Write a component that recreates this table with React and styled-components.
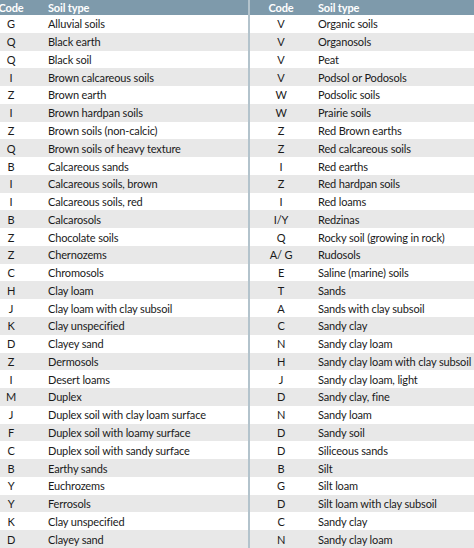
import React from "react";
import styled, { createGlobalStyle } from "styled-components";

const GlobalStyle = createGlobalStyle`
  html, body {
    margin: 0;
    padding: 0;
    background: #fff;
  }
`;

const Page = styled.div`
  width: 474px;
  height: 548px;
  overflow: hidden;
  font-family: 'Lato', 'Open Sans', sans-serif;
  color: #1a1a1a;
`;

const Table = styled.div`
  display: flex;
  margin-left: -20px;
  width: 540px;
`;

const Half = styled.div`
  width: 270px;
  box-sizing: border-box;
  display: grid;
  grid-template-rows: 15px repeat(30, 17.77px);
  border-right: ${(p) => (p.divider ? "2px solid #b3c3cc" : "none")};
`;

const Row = styled.div`
  display: grid;
  grid-template-columns: 62px 1fr;
  align-items: center;
  background: ${(p) => (p.header ? "#7e9aab" : p.shade ? "#e8e8e8" : "#fff")};
  color: ${(p) => (p.header ? "#fff" : "#1a1a1a")};
  font-weight: ${(p) => (p.header ? 700 : 400)};
  font-size: 11px;
  letter-spacing: -0.15px;
  white-space: nowrap;
  overflow: hidden;
`;

const Code = styled.span`
  text-align: center;
`;

const Name = styled.span`
  padding-left: 6px;
`;

const left = [
  ["G", "Alluvial soils"],
  ["Q", "Black earth"],
  ["Q", "Black soil"],
  ["I", "Brown calcareous soils"],
  ["Z", "Brown earth"],
  ["I", "Brown hardpan soils"],
  ["Z", "Brown soils (non-calcic)"],
  ["Q", "Brown soils of heavy texture"],
  ["B", "Calcareous sands"],
  ["I", "Calcareous soils, brown"],
  ["I", "Calcareous soils, red"],
  ["B", "Calcarosols"],
  ["Z", "Chocolate soils"],
  ["Z", "Chernozems"],
  ["C", "Chromosols"],
  ["H", "Clay loam"],
  ["J", "Clay loam with clay subsoil"],
  ["K", "Clay unspecified"],
  ["D", "Clayey sand"],
  ["Z", "Dermosols"],
  ["I", "Desert loams"],
  ["M", "Duplex"],
  ["J", "Duplex soil with clay loam surface"],
  ["F", "Duplex soil with loamy surface"],
  ["C", "Duplex soil with sandy surface"],
  ["B", "Earthy sands"],
  ["Y", "Euchrozems"],
  ["Y", "Ferrosols"],
  ["K", "Clay unspecified"],
  ["D", "Clayey sand"],
];

const right = [
  ["V", "Organic soils"],
  ["V", "Organosols"],
  ["V", "Peat"],
  ["V", "Podsol or Podosols"],
  ["W", "Podsolic soils"],
  ["W", "Prairie soils"],
  ["Z", "Red Brown earths"],
  ["Z", "Red calcareous soils"],
  ["I", "Red earths"],
  ["Z", "Red hardpan soils"],
  ["I", "Red loams"],
  ["I/Y", "Redzinas"],
  ["Q", "Rocky soil (growing in rock)"],
  ["A/ G", "Rudosols"],
  ["E", "Saline (marine) soils"],
  ["T", "Sands"],
  ["A", "Sands with clay subsoil"],
  ["C", "Sandy clay"],
  ["N", "Sandy clay loam"],
  ["H", "Sandy clay loam with clay subsoil"],
  ["J", "Sandy clay loam, light"],
  ["D", "Sandy clay, fine"],
  ["N", "Sandy loam"],
  ["D", "Sandy soil"],
  ["D", "Siliceous sands"],
  ["B", "Silt"],
  ["G", "Silt loam"],
  ["D", "Silt loam with clay subsoil"],
  ["C", "Sandy clay"],
  ["N", "Sandy clay loam"],
];

const Column = ({ rows, divider }) => (
  <Half divider={divider ? 1 : 0}>
    <Row header>
      <Code>Code</Code>
      <Name>Soil type</Name>
    </Row>
    {rows.map(([code, name], i) => (
      <Row key={i} shade={i % 2 === 1}>
        <Code>{code}</Code>
        <Name>{name}</Name>
      </Row>
    ))}
  </Half>
);

export default function App() {
  return (
    <Page>
      <GlobalStyle />
      <Table>
        <Column rows={left} divider />
        <Column rows={right} />
      </Table>
    </Page>
  );
}
